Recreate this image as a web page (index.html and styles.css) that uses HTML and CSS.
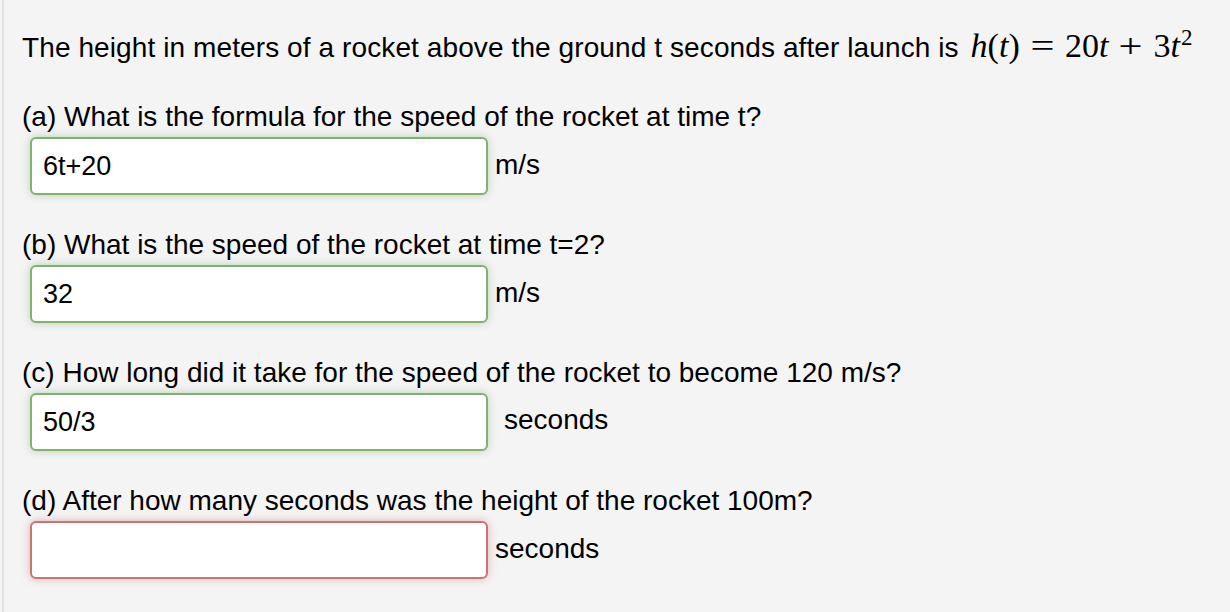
FILE: index.html
```html
<!DOCTYPE html>
<html lang="en">
<head>
  <meta charset="UTF-8">
  <title>Rocket height</title>
  <link rel="stylesheet" href="styles.css">
</head>
<body>

  <div class="page">
    <p class="intro">The height in meters of a rocket above the ground t seconds after launch is
      <span class="math"><i>h</i>(<i>t</i>)<span class="op">=</span>20<i>t</i><span class="op">+</span>3<i>t</i><sup>2</sup></span>
    </p>

    <div class="part">
      <p class="question">(a) What is the formula for the speed of the rocket at time t?</p>
      <div class="answer-row">
        <input class="answer correct" type="text" value="6t+20">
        <span class="unit">m/s</span>
      </div>
    </div>

    <div class="part">
      <p class="question">(b) What is the speed of the rocket at time t=2?</p>
      <div class="answer-row">
        <input class="answer correct" type="text" value="32">
        <span class="unit">m/s</span>
      </div>
    </div>

    <div class="part">
      <p class="question">(c) How long did it take for the speed of the rocket to become 120 m/s?</p>
      <div class="answer-row">
        <input class="answer correct" type="text" value="50/3">
        <span class="unit spaced">seconds</span>
      </div>
    </div>

    <div class="part">
      <p class="question">(d) After how many seconds was the height of the rocket 100m?</p>
      <div class="answer-row">
        <input class="answer wrong" type="text" value="">
        <span class="unit">seconds</span>
      </div>
    </div>
  </div>

</body>
</html>
```

FILE: styles.css
```css
body {
  margin: 0;
  background: #f4f4f4;
  font-family: 'Liberation Sans', Arial, sans-serif;
  font-size: 28px;
  color: #000;
}

.page {
  margin-left: 2px;
  border-left: 2px solid #e2e2e2;
  min-height: 612px;
  padding: 32px 0 0 18px;
  box-sizing: border-box;
}

p {
  margin: 0;
  line-height: 32px;
}

.intro {
  height: 32px;
  margin-bottom: 37px;
  white-space: nowrap;
  letter-spacing: 0.1px;
}

/* math formula */
.math {
  font-family: 'Liberation Serif', 'Times New Roman', serif;
  font-size: 34px;
  line-height: 20px;
  margin-left: 4px;
  letter-spacing: 0;
}

.math .op {
  display: inline-block;
  margin: 0 13px;
  transform: scaleX(1.25);
}

.math sup {
  font-size: 23px;
  line-height: 0;
  margin-left: 1px;
}

/* answer parts */
.part {
  margin-bottom: 34px;
}

.question {
  margin-bottom: 4px;
}

.answer-row {
  display: flex;
  align-items: center;
  gap: 7px;
  padding-left: 8px;
}

.answer {
  width: 458px;
  height: 58px;
  box-sizing: border-box;
  border-radius: 6px;
  background: #fff;
  font-family: 'Liberation Sans', Arial, sans-serif;
  font-size: 27px;
  padding: 0 11px;
  outline: none;
}

.answer.correct {
  border: 2px solid #7fb173;
  box-shadow: 0 0 8px rgba(110, 170, 100, 0.45);
}

.answer.wrong {
  border: 2px solid #cb7474;
  box-shadow: 0 0 8px rgba(200, 100, 100, 0.45);
}

.unit {
  margin-top: -2px;
}

.unit.spaced {
  margin-left: 9px;
  margin-top: -4px;
}
```
